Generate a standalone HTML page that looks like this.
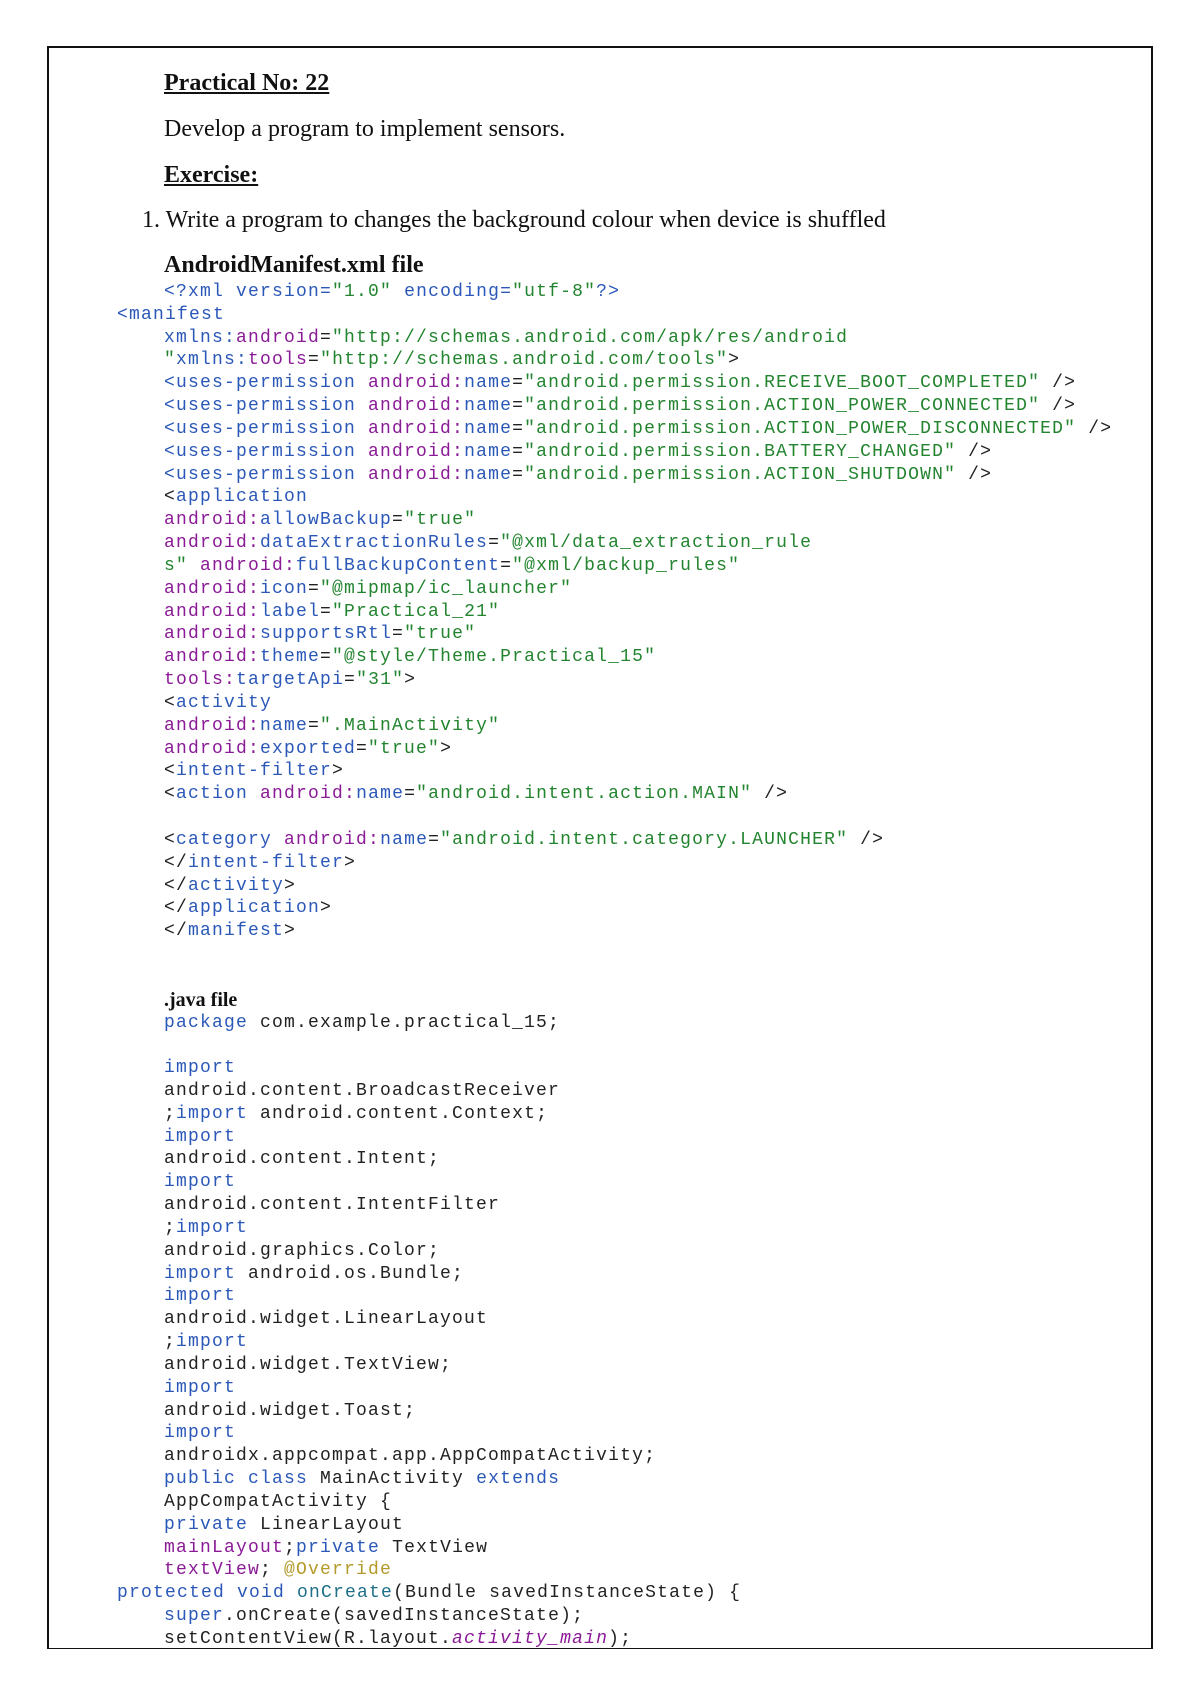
<!DOCTYPE html>
<html><head><meta charset="utf-8"><style>
body{margin:0;background:#fff;width:1200px;height:1696px;position:relative;overflow:hidden}
.box{position:absolute;left:47px;top:46px;width:1102px;height:1600px;border:2px solid #111;border-bottom:1.5px solid #111}
.t{position:absolute;font-family:"Liberation Serif",serif;font-size:24px;color:#111;white-space:nowrap;line-height:24px}
.code{position:absolute;left:0;top:281px;width:1200px;font-family:"Liberation Mono",monospace;font-size:18px;color:#222}
.l{height:22.84px;line-height:22.84px;white-space:pre;padding-left:164px;letter-spacing:1.2px}
.o{padding-left:117px}
.b{color:#2b58b8}.p{color:#8a1a96}.g{color:#23842f}.y{color:#b49a2a}.c{color:#1c6f86}
.i{font-style:italic;color:#8a1a96}
</style></head><body>
<div class="box"></div>
<div class="t" style="left:164px;top:71px;font-weight:bold;text-decoration:underline">Practical No: 22</div>
<div class="t" style="left:164px;top:117px">Develop a program to implement sensors.</div>
<div class="t" style="left:164px;top:163px;font-weight:bold;text-decoration:underline">Exercise:</div>
<div class="t" style="left:142px;top:208px">1. Write a program to changes the background colour when device is shuffled</div>
<div class="t" style="left:164px;top:253px;font-weight:bold">AndroidManifest.xml file</div>
<div class="code">
<div class="l"><span class="b">&lt;?xml version=</span><span class="g">"1.0"</span> <span class="b">encoding=</span><span class="g">"utf-8"</span><span class="b">?&gt;</span></div>
<div class="l o"><span class="b">&lt;manifest</span></div>
<div class="l"><span class="b">xmlns:</span><span class="p">android</span>=<span class="g">"http://schemas.android.com/apk/res/android</span></div>
<div class="l"><span class="g">"</span><span class="b">xmlns:</span><span class="p">tools</span>=<span class="g">"http://schemas.android.com/tools"</span>&gt;</div>
<div class="l"><span class="b">&lt;uses-permission</span> <span class="p">android:</span><span class="b">name</span>=<span class="g">"android.permission.RECEIVE_BOOT_COMPLETED"</span> /&gt;</div>
<div class="l"><span class="b">&lt;uses-permission</span> <span class="p">android:</span><span class="b">name</span>=<span class="g">"android.permission.ACTION_POWER_CONNECTED"</span> /&gt;</div>
<div class="l"><span class="b">&lt;uses-permission</span> <span class="p">android:</span><span class="b">name</span>=<span class="g">"android.permission.ACTION_POWER_DISCONNECTED"</span> /&gt;</div>
<div class="l"><span class="b">&lt;uses-permission</span> <span class="p">android:</span><span class="b">name</span>=<span class="g">"android.permission.BATTERY_CHANGED"</span> /&gt;</div>
<div class="l"><span class="b">&lt;uses-permission</span> <span class="p">android:</span><span class="b">name</span>=<span class="g">"android.permission.ACTION_SHUTDOWN"</span> /&gt;</div>
<div class="l">&lt;<span class="b">application</span></div>
<div class="l"><span class="p">android:</span><span class="b">allowBackup</span>=<span class="g">"true"</span></div>
<div class="l"><span class="p">android:</span><span class="b">dataExtractionRules</span>=<span class="g">"@xml/data_extraction_rule</span></div>
<div class="l"><span class="g">s"</span> <span class="p">android:</span><span class="b">fullBackupContent</span>=<span class="g">"@xml/backup_rules"</span></div>
<div class="l"><span class="p">android:</span><span class="b">icon</span>=<span class="g">"@mipmap/ic_launcher"</span></div>
<div class="l"><span class="p">android:</span><span class="b">label</span>=<span class="g">"Practical_21"</span></div>
<div class="l"><span class="p">android:</span><span class="b">supportsRtl</span>=<span class="g">"true"</span></div>
<div class="l"><span class="p">android:</span><span class="b">theme</span>=<span class="g">"@style/Theme.Practical_15"</span></div>
<div class="l"><span class="p">tools:</span><span class="b">targetApi</span>=<span class="g">"31"</span>&gt;</div>
<div class="l">&lt;<span class="b">activity</span></div>
<div class="l"><span class="p">android:</span><span class="b">name</span>=<span class="g">".MainActivity"</span></div>
<div class="l"><span class="p">android:</span><span class="b">exported</span>=<span class="g">"true"</span>&gt;</div>
<div class="l">&lt;<span class="b">intent-filter</span>&gt;</div>
<div class="l">&lt;<span class="b">action</span> <span class="p">android:</span><span class="b">name</span>=<span class="g">"android.intent.action.MAIN"</span> /&gt;</div>
<div class="l"> </div>
<div class="l">&lt;<span class="b">category</span> <span class="p">android:</span><span class="b">name</span>=<span class="g">"android.intent.category.LAUNCHER"</span> /&gt;</div>
<div class="l">&lt;/<span class="b">intent-filter</span>&gt;</div>
<div class="l">&lt;/<span class="b">activity</span>&gt;</div>
<div class="l">&lt;/<span class="b">application</span>&gt;</div>
<div class="l">&lt;/<span class="b">manifest</span>&gt;</div>
<div class="l"> </div>
<div class="l"> </div>
<div class="l" style="font-family:'Liberation Serif',serif;font-weight:bold;font-size:20px;letter-spacing:0;color:#111">.java file</div>
<div class="l"><span class="b">package</span> com.example.practical_15;</div>
<div class="l"> </div>
<div class="l"><span class="b">import</span></div>
<div class="l">android.content.BroadcastReceiver</div>
<div class="l">;<span class="b">import</span> android.content.Context;</div>
<div class="l"><span class="b">import</span></div>
<div class="l">android.content.Intent;</div>
<div class="l"><span class="b">import</span></div>
<div class="l">android.content.IntentFilter</div>
<div class="l">;<span class="b">import</span></div>
<div class="l">android.graphics.Color;</div>
<div class="l"><span class="b">import</span> android.os.Bundle;</div>
<div class="l"><span class="b">import</span></div>
<div class="l">android.widget.LinearLayout</div>
<div class="l">;<span class="b">import</span></div>
<div class="l">android.widget.TextView;</div>
<div class="l"><span class="b">import</span></div>
<div class="l">android.widget.Toast;</div>
<div class="l"><span class="b">import</span></div>
<div class="l">androidx.appcompat.app.AppCompatActivity;</div>
<div class="l"><span class="b">public class</span> MainActivity <span class="b">extends</span></div>
<div class="l">AppCompatActivity {</div>
<div class="l"><span class="b">private</span> LinearLayout</div>
<div class="l"><span class="p">mainLayout</span>;<span class="b">private</span> TextView</div>
<div class="l"><span class="p">textView</span>; <span class="y">@Override</span></div>
<div class="l o"><span class="b">protected void</span> <span class="c">onCreate</span>(Bundle savedInstanceState) {</div>
<div class="l"><span class="b">super</span>.onCreate(savedInstanceState);</div>
<div class="l">setContentView(R.layout.<span class="i">activity_main</span>);</div>
</div>
</body></html>
